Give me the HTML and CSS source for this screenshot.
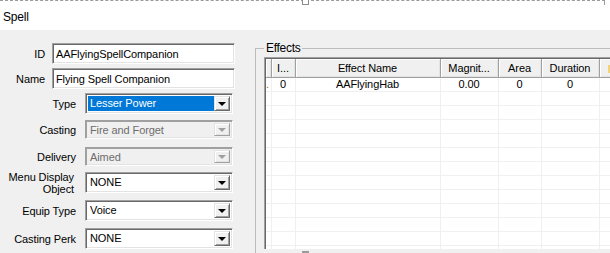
FILE: index.html
```html
<!DOCTYPE html>
<html lang="en">
<head>
    <meta charset="UTF-8">
    <title>Spell</title>
    <link rel="stylesheet" href="styles.css">
</head>
<body>

    <div class="header">
        <div class="dash"></div>
        <div class="handle handle-top"></div>
        <div class="title">Spell</div>
    </div>

    <div class="form">
        <div class="fields">
            <div class="row row-id">
                <label class="lbl lbl-short">ID</label>
                <div class="edit">AAFlyingSpellCompanion</div>
            </div>
            <div class="row row-name">
                <label class="lbl lbl-short">Name</label>
                <div class="edit">Flying Spell Companion</div>
            </div>
            <div class="row row-type">
                <label class="lbl">Type</label>
                <div class="combo">
                    <span class="value selected">Lesser Power</span>
                    <span class="drop"><i></i></span>
                </div>
            </div>
            <div class="row row-casting">
                <label class="lbl">Casting</label>
                <div class="combo disabled">
                    <span class="value">Fire and Forget</span>
                    <span class="drop"><i></i></span>
                </div>
            </div>
            <div class="row row-delivery">
                <label class="lbl">Delivery</label>
                <div class="combo disabled">
                    <span class="value">Aimed</span>
                    <span class="drop"><i></i></span>
                </div>
            </div>
            <div class="row row-menu">
                <label class="lbl lbl-two">Menu Display<br>Object</label>
                <div class="combo">
                    <span class="value">NONE</span>
                    <span class="drop"><i></i></span>
                </div>
            </div>
            <div class="row row-equip">
                <label class="lbl">Equip Type</label>
                <div class="combo">
                    <span class="value">Voice</span>
                    <span class="drop"><i></i></span>
                </div>
            </div>
            <div class="row row-perk">
                <label class="lbl">Casting Perk</label>
                <div class="combo">
                    <span class="value">NONE</span>
                    <span class="drop"><i></i></span>
                </div>
            </div>
        </div>

        <fieldset class="effects">
            <legend>Effects</legend>
            <div class="list">
                <table>
                    <colgroup>
                        <col style="width:5px">
                        <col style="width:24px">
                        <col style="width:145px">
                        <col style="width:58px">
                        <col style="width:43px">
                        <col style="width:58px">
                        <col style="width:60px">
                    </colgroup>
                    <thead>
                        <tr>
                            <th></th>
                            <th>I...</th>
                            <th>Effect Name</th>
                            <th>Magnit...</th>
                            <th>Area</th>
                            <th>Duration</th>
                            <th class="more"><span class="sort"></span></th>
                        </tr>
                    </thead>
                    <tbody id="rows">
                        <tr>
                            <td class="mark">.</td>
                            <td>0</td>
                            <td>AAFlyingHab</td>
                            <td>0.00</td>
                            <td>0</td>
                            <td>0</td>
                            <td></td>
                        </tr>
                    </tbody>
                </table>
            </div>
        </fieldset>
        <div class="handle handle-bottom"></div>
    </div>

    <script>
        // empty grid rows below the effect
        const body = document.getElementById('rows');
        for (let i = 0; i < 12; i++) {
            const tr = document.createElement('tr');
            for (let c = 0; c < 7; c++) {
                tr.appendChild(document.createElement('td'));
            }
            body.appendChild(tr);
        }
    </script>

</body>
</html>
```

FILE: styles.css
```css
html, body {
    margin: 0;
    padding: 0;
}
body {
    width: 610px;
    height: 253px;
    overflow: hidden;
    background-color: #fff;
    font-family: "Liberation Sans", Arial, sans-serif;
    font-size: 11px;
    letter-spacing: -0.1px;
    color: #000;
}
.header {
    position: relative;
    height: 30px;
    background-color: #fff;
}
.dash {
    width: 605px;
    height: 5px;
    border-top: 1px dashed #9a9a9a;
    border-right: 1px dashed #9a9a9a;
    box-sizing: border-box;
}
.handle {
    position: absolute;
    width: 5px;
    height: 5px;
    background-color: #fff;
    border: 1px solid #8c8c8c;
}
.handle-top {
    left: 302px;
    top: -2px;
}
.handle-bottom {
    left: 302px;
    top: 221px;
    background-color: #9a9a9a;
    border-color: #9a9a9a;
    height: 1px;
}
.title {
    position: absolute;
    left: 3px;
    top: 10px;
    font-size: 12px;
    letter-spacing: -0.2px;
}
.form {
    position: relative;
    display: flex;
    height: 223px;
    background-color: #f0f0f0;
    overflow: hidden;
}
.fields {
    flex: none;
    width: 255px;
    padding-top: 13px;
}
.row {
    display: flex;
    align-items: center;
    height: 21px;
}
.row-name { margin-top: 4px; }
.row-type { margin-top: 4px; }
.row-casting { margin-top: 6px; height: 19px; }
.row-delivery { margin-top: 8px; height: 19px; }
.row-menu { margin-top: 6px; }
.row-equip { margin-top: 7px; }
.row-perk { margin-top: 7px; }
.lbl {
    flex: none;
    width: 76px;
    margin-right: 9px;
    text-align: right;
}
.lbl-short {
    width: 45px;
    margin-right: 7px;
}
.lbl-two {
    line-height: 12px;
    margin-right: 11px;
    width: 74px;
}
.edit, .combo {
    box-sizing: border-box;
    height: 100%;
    background-color: #fff;
    border-top: 1px solid #a0a0a0;
    border-left: 1px solid #a0a0a0;
    border-right: 1px solid #fff;
    border-bottom: 1px solid #fff;
    box-shadow: inset 1px 1px 0 #696969, inset -1px -1px 0 #e3e3e3;
}
.edit {
    width: 183px;
    padding: 3px 3px;
    line-height: 14px;
}
.combo {
    display: flex;
    width: 148px;
    padding: 2px;
}
.value {
    flex: 1;
    padding-left: 2px;
    line-height: 15px;
}
.value.selected {
    background-color: #0078d7;
    color: #fff;
}
.drop {
    flex: none;
    width: 16px;
    box-sizing: border-box;
    display: flex;
    align-items: center;
    justify-content: center;
    background-color: #f0f0f0;
    border-top: 1px solid #e3e3e3;
    border-left: 1px solid #e3e3e3;
    border-right: 1px solid #696969;
    border-bottom: 1px solid #696969;
    box-shadow: inset 1px 1px 0 #fff, inset -1px -1px 0 #a0a0a0;
}
.drop i {
    width: 0;
    height: 0;
    border-left: 4px solid transparent;
    border-right: 4px solid transparent;
    border-top: 4px solid #000;
    margin-top: 1px;
}
.combo.disabled {
    background-color: #f0f0f0;
    color: #6d6d6d;
    box-shadow: inset 1px 1px 0 #a0a0a0, inset -1px -1px 0 #e3e3e3;
}
.combo.disabled .drop {
    border-right-color: #a0a0a0;
    border-bottom-color: #a0a0a0;
    box-shadow: inset 1px 1px 0 #fff, inset -1px -1px 0 #e3e3e3;
}
.combo.disabled .drop i {
    border-top-color: #a0a0a0;
}
.effects {
    flex: none;
    width: 380px;
    margin: 12px 0 -20px 0;
    padding: 0 0 0 8px;
    border: 1px solid #bcbcbc;
    border-right: none;
}
.effects legend {
    padding: 0 2px;
    margin-left: 0;
    font-size: 12px;
    letter-spacing: -0.3px;
    line-height: 13px;
}
.list {
    margin-top: 2px;
    height: 190px;
    overflow: hidden;
    background-color: #fff;
    border-top: 1px solid #a0a0a0;
    border-left: 1px solid #a0a0a0;
    box-shadow: inset 1px 1px 0 #696969;
    padding: 1px 0 0 1px;
}
table {
    table-layout: fixed;
    border-collapse: collapse;
    width: 393px;
}
th {
    height: 18px;
    padding: 0;
    font-weight: normal;
    text-align: center;
    background-color: #f0f0f0;
    border-right: 1px solid #a0a0a0;
    border-bottom: 1px solid #a0a0a0;
    box-shadow: inset 1px 1px 0 #fff, inset -1px -1px 0 #e3e3e3;
    overflow: hidden;
    white-space: nowrap;
}
th.more {
    text-align: left;
}
td {
    height: 13px;
    padding: 0;
    line-height: 13px;
    text-align: center;
    border-right: 1px solid #f0f0f0;
    border-bottom: 1px solid #f0f0f0;
    overflow: hidden;
    white-space: nowrap;
}
td.mark {
    color: #b06a20;
    text-align: left;
}
.sort {
    display: inline-block;
    width: 3px;
    height: 8px;
    margin-left: 8px;
    vertical-align: middle;
    background-color: #f2d37a;
}
```
